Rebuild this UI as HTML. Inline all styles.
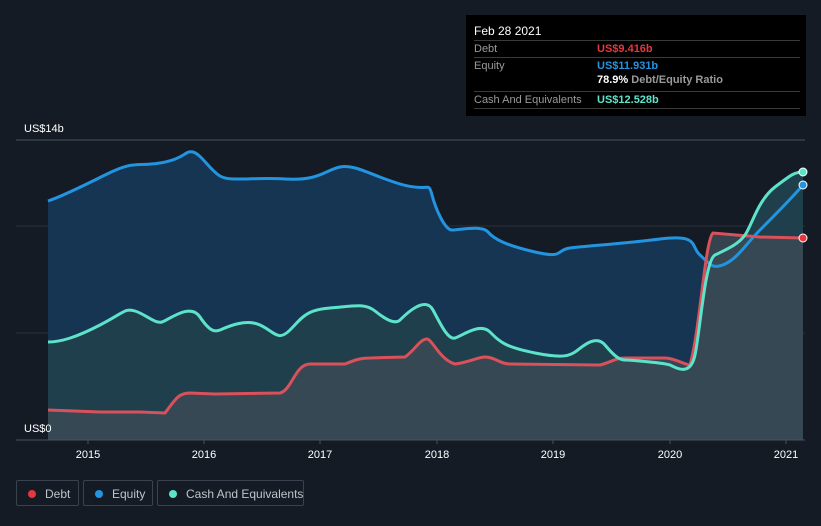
<!DOCTYPE html>
<html><head><meta charset="utf-8"><style>
body{margin:0;width:821px;height:526px;background:#151b25;font-family:"Liberation Sans",sans-serif;overflow:hidden;position:relative}
.tt{position:absolute;left:466px;top:15px;width:340px;height:101px;background:#000;color:#fff;font-size:11px}
.row{position:absolute;left:8px;right:6px;border-top:1px solid #3a3a3a;height:16px;line-height:16px;color:#9a9a9a}
.v{position:absolute;left:123px;font-weight:bold}
.leg{position:absolute;top:480px;height:26px;border:1px solid #3a424e;border-radius:2px;color:#bfc4ca;font-size:12px;line-height:26px;box-sizing:border-box;white-space:nowrap}
.dot{position:absolute;left:11px;top:9px;width:8px;height:8px;border-radius:50%}
</style></head><body>
<svg width="821" height="526" style="position:absolute;left:0;top:0">
<line x1="16" y1="140" x2="805" y2="140" stroke="#4a505a"/>
<line x1="16" y1="226" x2="805" y2="226" stroke="#2a3038"/>
<line x1="16" y1="333" x2="805" y2="333" stroke="#2a3038"/>
<path d="M48,201 C60,197 75,190 105,175 S135,167 160,163 S185,150 193,152 S210,170 220,176 S250,177 285,179 S325,170 340,167 S370,175 400,184 S428,180 432,195 S445,230 452,230 S482,225 488,232 S505,245 535,252 S555,250 570,248 S620,244 660,239 S690,246 700,255 S712,270 725,264 S745,245 760,230 S790,200 803,185 L803,440 L48,440Z" fill="#163553"/>
<path d="M48,342 C60,342 75,338 100,325 S125,308 135,311 S155,324 162,322 S190,302 200,317 S215,332 220,330 S245,318 260,325 S278,342 290,330 S305,310 330,308 S365,303 375,311 S395,325 400,320 S425,295 433,310 S448,340 455,338 S480,322 490,332 S505,347 535,353 S570,355 575,352 S595,333 605,345 S620,360 625,360 S665,363 670,365 S690,378 695,355 S705,260 715,255 S738,245 745,235 S758,200 775,187 S795,172 803,172 L803,440 L48,440Z" fill="#1e3f4b"/>
<path d="M48,410 L100,412 L140,412 L165,413 C175,400 178,393 190,393 L215,394 L280,393 C292,390 295,364 310,364 L345,364 C355,360 360,358 370,358 L405,357 C415,350 420,339 427,339 C432,339 440,360 455,364 C470,362 478,357 485,357 C495,357 500,364 510,364 L600,365 C612,362 615,358 625,358 L665,358 C675,358 685,365 690,365 C700,330 705,240 713,233 L760,237 L803,238 L803,440 L48,440Z" fill="#3a4a55" fill-opacity=".85"/>
<path d="M48,201 C60,197 75,190 105,175 S135,167 160,163 S185,150 193,152 S210,170 220,176 S250,177 285,179 S325,170 340,167 S370,175 400,184 S428,180 432,195 S445,230 452,230 S482,225 488,232 S505,245 535,252 S555,250 570,248 S620,244 660,239 S690,246 700,255 S712,270 725,264 S745,245 760,230 S790,200 803,185" fill="none" stroke="#2394df" stroke-width="3"/>
<path d="M48,410 L100,412 L140,412 L165,413 C175,400 178,393 190,393 L215,394 L280,393 C292,390 295,364 310,364 L345,364 C355,360 360,358 370,358 L405,357 C415,350 420,339 427,339 C432,339 440,360 455,364 C470,362 478,357 485,357 C495,357 500,364 510,364 L600,365 C612,362 615,358 625,358 L665,358 C675,358 685,365 690,365 C700,330 705,240 713,233 L760,237 L803,238" fill="none" stroke="#d9515a" stroke-width="3"/>
<path d="M48,342 C60,342 75,338 100,325 S125,308 135,311 S155,324 162,322 S190,302 200,317 S215,332 220,330 S245,318 260,325 S278,342 290,330 S305,310 330,308 S365,303 375,311 S395,325 400,320 S425,295 433,310 S448,340 455,338 S480,322 490,332 S505,347 535,353 S570,355 575,352 S595,333 605,345 S620,360 625,360 S665,363 670,365 S690,378 695,355 S705,260 715,255 S738,245 745,235 S758,200 775,187 S795,172 803,172" fill="none" stroke="#5ee3cb" stroke-width="3"/>
<circle cx="803" cy="172" r="4" fill="#5ee3cb" stroke="#fff" stroke-width="1"/>
<circle cx="803" cy="185" r="4" fill="#2394df" stroke="#fff" stroke-width="1"/>
<circle cx="803" cy="238" r="4" fill="#e5373f" stroke="#fff" stroke-width="1"/>
<line x1="16" y1="440" x2="805" y2="440" stroke="#4a505a"/>
<g stroke="#4a505a"><line x1="88" y1="440" x2="88" y2="444"/><line x1="204" y1="440" x2="204" y2="444"/><line x1="320" y1="440" x2="320" y2="444"/><line x1="437" y1="440" x2="437" y2="444"/><line x1="553" y1="440" x2="553" y2="444"/><line x1="670" y1="440" x2="670" y2="444"/><line x1="786" y1="440" x2="786" y2="444"/></g>
<g fill="#fff" font-size="11" font-family="Liberation Sans" text-anchor="middle"><text x="88" y="458">2015</text><text x="204" y="458">2016</text><text x="320" y="458">2017</text><text x="437" y="458">2018</text><text x="553" y="458">2019</text><text x="670" y="458">2020</text><text x="786" y="458">2021</text></g>
<text x="24" y="132" fill="#fff" font-size="11">US$14b</text>
<text x="24" y="432" fill="#fff" font-size="11">US$0</text>
</svg>
<div class="tt">
<div style="position:absolute;left:8px;top:9px;font-size:12px">Feb 28 2021</div>
<div class="row" style="top:25px">Debt<span class="v" style="color:#e5373f">US$9.416b</span></div>
<div class="row" style="top:42px">Equity<span class="v" style="color:#2394df">US$11.931b</span></div>
<div style="position:absolute;left:131px;top:59px;color:#9a9a9a;font-weight:bold"><span style="color:#fff">78.9%</span> Debt/Equity Ratio</div>
<div class="row" style="top:76px">Cash And Equivalents<span class="v" style="color:#5ee3cb">US$12.528b</span></div>
<div class="row" style="top:93px;height:0"></div>
</div>
<div class="leg" style="left:16px;width:63px"><span class="dot" style="background:#e5373f"></span><span style="position:absolute;left:28px">Debt</span></div>
<div class="leg" style="left:83px;width:70px"><span class="dot" style="background:#2394df"></span><span style="position:absolute;left:28px">Equity</span></div>
<div class="leg" style="left:157px;width:147px"><span class="dot" style="background:#5ee3cb"></span><span style="position:absolute;left:28px">Cash And Equivalents</span></div>
</body></html>
